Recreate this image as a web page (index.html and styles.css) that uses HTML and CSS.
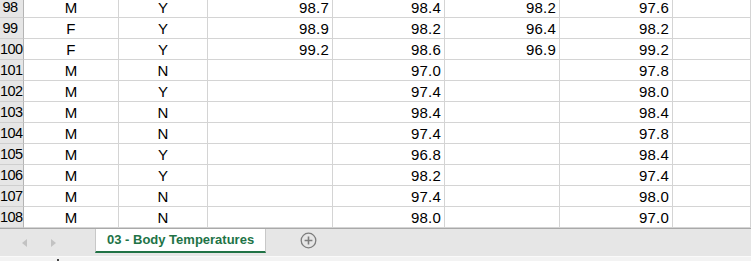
FILE: index.html
```html
<!DOCTYPE html>
<html>
<head>
<meta charset="utf-8">
<link rel="stylesheet" href="styles.css">
</head>
<body>
<div class="sheet">
  <div class="grid">
    <div class="rh">98</div><div class="c ctr">M</div><div class="c ctr">Y</div><div class="c num">98.7</div><div class="c num">98.4</div><div class="c num">98.2</div><div class="c num">97.6</div><div class="c"></div>
    <div class="rh">99</div><div class="c ctr">F</div><div class="c ctr">Y</div><div class="c num">98.9</div><div class="c num">98.2</div><div class="c num">96.4</div><div class="c num">98.2</div><div class="c"></div>
    <div class="rh">100</div><div class="c ctr">F</div><div class="c ctr">Y</div><div class="c num">99.2</div><div class="c num">98.6</div><div class="c num">96.9</div><div class="c num">99.2</div><div class="c"></div>
    <div class="rh">101</div><div class="c ctr">M</div><div class="c ctr">N</div><div class="c num"></div><div class="c num">97.0</div><div class="c num"></div><div class="c num">97.8</div><div class="c"></div>
    <div class="rh">102</div><div class="c ctr">M</div><div class="c ctr">Y</div><div class="c num"></div><div class="c num">97.4</div><div class="c num"></div><div class="c num">98.0</div><div class="c"></div>
    <div class="rh">103</div><div class="c ctr">M</div><div class="c ctr">N</div><div class="c num"></div><div class="c num">98.4</div><div class="c num"></div><div class="c num">98.4</div><div class="c"></div>
    <div class="rh">104</div><div class="c ctr">M</div><div class="c ctr">N</div><div class="c num"></div><div class="c num">97.4</div><div class="c num"></div><div class="c num">97.8</div><div class="c"></div>
    <div class="rh">105</div><div class="c ctr">M</div><div class="c ctr">Y</div><div class="c num"></div><div class="c num">96.8</div><div class="c num"></div><div class="c num">98.4</div><div class="c"></div>
    <div class="rh">106</div><div class="c ctr">M</div><div class="c ctr">Y</div><div class="c num"></div><div class="c num">98.2</div><div class="c num"></div><div class="c num">97.4</div><div class="c"></div>
    <div class="rh">107</div><div class="c ctr">M</div><div class="c ctr">N</div><div class="c num"></div><div class="c num">97.4</div><div class="c num"></div><div class="c num">98.0</div><div class="c"></div>
    <div class="rh">108</div><div class="c ctr">M</div><div class="c ctr">N</div><div class="c num"></div><div class="c num">98.0</div><div class="c num"></div><div class="c num">97.0</div><div class="c"></div>
  </div>
</div>
<div class="tabbar">
  <div class="nav">
    <svg class="arrow" width="5" height="8" viewBox="0 0 5 8"><path d="M5 0 L0 4 L5 8 Z" fill="#c2c2c2"/></svg>
    <svg class="arrow" width="5" height="8" viewBox="0 0 5 8"><path d="M0 0 L5 4 L0 8 Z" fill="#c2c2c2"/></svg>
  </div>
  <div class="tab">03 - Body Temperatures</div>
  <div class="add">
    <svg width="17" height="17" viewBox="0 0 17 17"><circle cx="8.5" cy="8.5" r="7.3" fill="none" stroke="#7d7d7d" stroke-width="1.3"/><path d="M8.5 4.6 V12.4 M4.6 8.5 H12.4" stroke="#7d7d7d" stroke-width="1.6"/></svg>
  </div>
</div>
<div class="status"><span class="mark"></span></div>
</body>
</html>
```
FILE: styles.css
```css
html, body {
  margin: 0;
  padding: 0;
  background: #fff;
  overflow: hidden;
}
body {
  width: 751px;
  height: 261px;
}
.sheet {
  height: 228px;
  overflow: hidden;
}
.grid {
  display: grid;
  grid-template-columns: 24px 95px 89px 125px 112px 115px 113px 1fr;
  grid-auto-rows: 21px;
  margin-top: -3px;
  font-family: "Liberation Sans", Arial, sans-serif;
  font-size: 15px;
  color: #000;
}
.rh {
  box-sizing: border-box;
  background: #e6e6e6;
  border-right: 1px solid #b4b4b4;
  border-bottom: 1px solid #cfcfcf;
  text-align: center;
  padding-right: 3px;
  padding-top: 1px;
  line-height: 19px;
  font-size: 14.5px;
  letter-spacing: -0.6px;
  color: #000;
  white-space: nowrap;
}
.c {
  box-sizing: border-box;
  border-right: 1px solid #d4d4d4;
  border-bottom: 1px solid #d4d4d4;
  padding-top: 1px;
  line-height: 20px;
  letter-spacing: 0.2px;
  white-space: nowrap;
}
.ctr {
  text-align: center;
}
.num {
  text-align: right;
  padding-right: 3px;
}
.tabbar {
  display: flex;
  background: #e6e6e6;
  border-top: 1px solid #a9a9a9;
  box-sizing: border-box;
  height: 28px;
}
.nav {
  width: 95px;
  display: flex;
  align-items: center;
  gap: 24px;
  padding-left: 22px;
  box-sizing: border-box;
}
.arrow {
  display: block;
  margin-top: 1px;
}
.tab {
  box-sizing: border-box;
  width: 171px;
  height: 24px;
  background: #fff;
  border-left: 1px solid #c8c8c8;
  border-right: 1px solid #c8c8c8;
  border-bottom: 2px solid #217346;
  color: #217346;
  font-family: "Liberation Sans", Arial, sans-serif;
  font-weight: bold;
  font-size: 13px;
  line-height: 22px;
  padding-left: 11px;
  white-space: nowrap;
}
.add {
  width: 84px;
  display: flex;
  justify-content: center;
  align-items: center;
  padding-bottom: 4px;
}
.add svg {
  display: block;
}
.status {
  height: 5px;
  background: #f3f3f3;
  border-top: 1px solid #fafafa;
  position: relative;
}
.mark {
  position: absolute;
  left: 57px;
  top: 2px;
  width: 2px;
  height: 3px;
  background: #444;
}
```
